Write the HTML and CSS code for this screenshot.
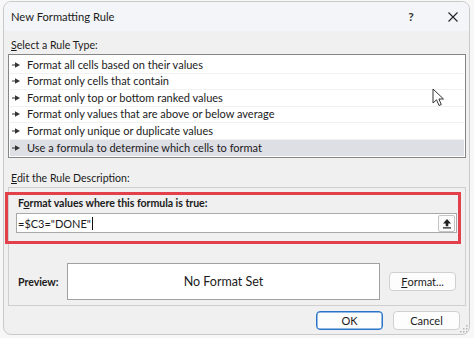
FILE: index.html
```html
<!DOCTYPE html>
<html>
<head>
<meta charset="utf-8">
<link rel="stylesheet" href="styles.css">
</head>
<body>
<div class="window">
  <div class="titlebar">
    <span class="title">New Formatting Rule</span>
    <span class="tb-help">?</span>
    <span class="tb-close">
      <svg width="12" height="12" viewBox="0 0 12 12"><path d="M1.5 1.5 L10.5 10.5 M10.5 1.5 L1.5 10.5" stroke="#222" stroke-width="1.1" fill="none"/></svg>
    </span>
  </div>
  <div class="content">
    <div class="label"><u>S</u>elect a Rule Type:</div>
    <div class="listbox">
      <div class="row"><svg class="arr" width="8" height="6" viewBox="0 0 8 6"><path d="M0 3 H4" stroke="#333" stroke-width="1"/><path d="M3 0.3 L8 3 L3 5.7 Z" fill="#333"/></svg>Format all cells based on their values</div>
      <div class="row"><svg class="arr" width="8" height="6" viewBox="0 0 8 6"><path d="M0 3 H4" stroke="#333" stroke-width="1"/><path d="M3 0.3 L8 3 L3 5.7 Z" fill="#333"/></svg>Format only cells that contain</div>
      <div class="row"><svg class="arr" width="8" height="6" viewBox="0 0 8 6"><path d="M0 3 H4" stroke="#333" stroke-width="1"/><path d="M3 0.3 L8 3 L3 5.7 Z" fill="#333"/></svg>Format only top or bottom ranked values</div>
      <div class="row"><svg class="arr" width="8" height="6" viewBox="0 0 8 6"><path d="M0 3 H4" stroke="#333" stroke-width="1"/><path d="M3 0.3 L8 3 L3 5.7 Z" fill="#333"/></svg>Format only values that are above or below average</div>
      <div class="row"><svg class="arr" width="8" height="6" viewBox="0 0 8 6"><path d="M0 3 H4" stroke="#333" stroke-width="1"/><path d="M3 0.3 L8 3 L3 5.7 Z" fill="#333"/></svg>Format only unique or duplicate values</div>
      <div class="row selected"><svg class="arr" width="8" height="6" viewBox="0 0 8 6"><path d="M0 3 H4" stroke="#333" stroke-width="1"/><path d="M3 0.3 L8 3 L3 5.7 Z" fill="#333"/></svg>Use a formula to determine which cells to format</div>
      <svg class="pointer" width="13" height="19" viewBox="0 0 13 19"><path d="M1 1 L1 15 L4.5 11.8 L7 17.5 L9.3 16.5 L6.9 11 L11.5 11 Z" fill="#fff" stroke="#333" stroke-width="1" stroke-linejoin="round"/></svg>
    </div>
    <div class="label label2"><u>E</u>dit the Rule Description:</div>
    <div class="group">
      <div class="bold-label">F<u>o</u>rmat values where this formula is true:</div>
      <div class="input">
        <span class="formula">=$C3="DONE"</span><span class="caret"></span>
        <span class="collapse">
          <svg width="10" height="11" viewBox="0 0 10 11"><path d="M5 1 L9 5.5 H6.3 V8.3 H3.7 V5.5 H1 Z" fill="#222"/><path d="M1 9.8 H9" stroke="#222" stroke-width="1.3"/></svg>
        </span>
      </div>
      <div class="preview-row">
        <span class="bold-label preview-label">Preview:</span>
        <div class="preview-box">No Format Set</div>
        <span class="btn format-btn"><u>F</u>ormat...</span>
      </div>
      <div class="highlight"></div>
    </div>
    <div class="buttons">
      <span class="btn ok">OK</span>
      <span class="btn">Cancel</span>
    </div>
  </div>
  <svg class="grip" width="8" height="8" viewBox="0 0 8 8"><g fill="#b5b5b5"><rect x="6" y="0" width="1.5" height="1.5"/><rect x="3" y="3" width="1.5" height="1.5"/><rect x="6" y="3" width="1.5" height="1.5"/><rect x="0" y="6" width="1.5" height="1.5"/><rect x="3" y="6" width="1.5" height="1.5"/><rect x="6" y="6" width="1.5" height="1.5"/></g></svg>
</div>
</body>
</html>
```
FILE: styles.css
```css
* { box-sizing: border-box; }
html, body { margin: 0; padding: 0; }
body {
  background: #f7f7f7;
  width: 474px;
  height: 338px;
  overflow: hidden;
  font-family: Lato, "Noto Sans", sans-serif;
  font-size: 11px;
  color: #1b1b1b;
}
.window {
  position: relative;
  margin: 1px 0 0 3px;
  width: 467px;
  height: 334px;
  border: 1px solid #c9c9c9;
  border-radius: 8px;
  overflow: hidden;
  background: #f0f0f0;
}
.titlebar {
  height: 29px;
  background: #f3f5f8;
  display: flex;
  align-items: center;
  padding-left: 7px;
  padding-right: 10px;
}
.title { flex: 1 1 auto; font-size: 11.2px; color: #1b1b1b; }
.tb-help { flex: none; width: 14px; text-align: center; font-size: 12px; font-weight: bold; color: #333; }
.tb-close { flex: none; width: 12px; height: 12px; display: flex; margin-left: 29px; }
.content { padding: 0 3px 0 4px; }
.label { height: 16px; line-height: 16px; margin-top: 6px; padding-left: 3px; font-size: 10.6px; }
.listbox {
  position: relative;
  margin-top: 1px;
  height: 104px;
  border: 1px solid #868686;
  background: #fff;
  padding: 2px 1px 1px 1px;
}
.row {
  height: 16.5px;
  line-height: 16px;
  display: flex;
  align-items: center;
  padding-left: 2px;
  border-bottom: 1px solid #f1f1f1;
  white-space: nowrap;
  font-size: 11px;
}
.row.selected { background: #dedee5; border-bottom: none; }
.arr { margin-right: 7px; flex: none; }
.pointer { position: absolute; left: 423px; top: 33px; }
.label2 { margin-top: 12px; }
.group {
  position: relative;
  margin-top: 1px;
  height: 119px;
  border: 1px solid #cfcfcf;
  padding: 7px 8px 5px 7px;
}
.bold-label { font-weight: bold; height: 16px; line-height: 16px; padding-left: 2px; font-size: 10.6px; letter-spacing: -0.05px; }
.input {
  margin-top: 2px;
  height: 20px;
  background: #fff;
  border: 1px solid #a9a9a9;
  display: flex;
  align-items: center;
  padding-left: 1px;
}
.formula { font-size: 11px; }
.caret { width: 1px; height: 13px; background: #111; margin-left: 1px; }
.collapse {
  margin-left: auto;
  margin-right: 1px;
  width: 17px;
  height: 17px;
  border: 1px solid #c4c4c4;
  border-radius: 2px;
  background: #fbfbfb;
  display: flex;
  align-items: center;
  justify-content: center;
}
.preview-row {
  margin-top: 30px;
  height: 37px;
  display: flex;
  align-items: center;
}
.preview-label { width: 51px; padding-left: 2px; }
.preview-box {
  width: 313px;
  height: 37px;
  background: #fff;
  border: 1px solid #a0a0a0;
  display: flex;
  align-items: center;
  justify-content: center;
  font-size: 12.5px;
}
.btn {
  display: flex;
  align-items: center;
  justify-content: center;
  width: 67px;
  height: 19px;
  background: #fdfdfd;
  border: 1px solid #d0d0d0;
  border-radius: 4px;
  font-size: 11px;
}
.format-btn { margin-left: 9px; }
.highlight {
  position: absolute;
  left: -4px;
  top: 4px;
  width: 456px;
  height: 52px;
  border: 3px solid #e2404a;
}
.buttons {
  display: flex;
  justify-content: flex-end;
  gap: 10px;
  margin-top: 5px;
  padding-right: 6px;
}
.btn.ok { border: 1px solid #2a74c9; box-shadow: inset 0 0 0 0.5px #2a74c9; }
.grip { position: absolute; right: 1px; bottom: 1px; }
```
